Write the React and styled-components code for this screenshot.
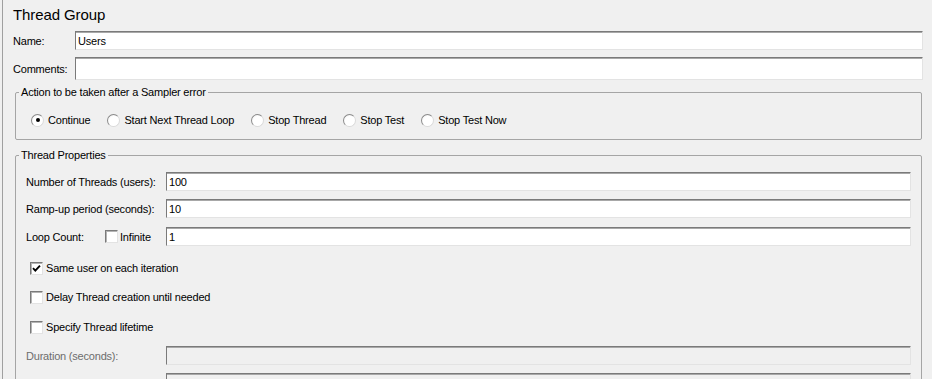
import styled, { createGlobalStyle } from "styled-components";

const GlobalStyle = createGlobalStyle`
  html, body {
    margin: 0;
    padding: 0;
    background: #f0f0f0;
  }
  body {
    font-family: "Liberation Sans", Arial, sans-serif;
    font-size: 11px;
    letter-spacing: -0.2px;
    color: #000;
  }
`;

const Panel = styled.div`
  height: 379px;
  box-sizing: border-box;
  margin-left: 2px;
  border-left: 1px solid #a0a0a0;
  padding: 6px 9px 0 10px;
  overflow: hidden;
`;

const Title = styled.h1`
  margin: 0;
  font-size: 15px;
  line-height: 18px;
  font-weight: normal;
  letter-spacing: -0.1px;
`;

const Row = styled.div`
  display: flex;
  align-items: center;
  margin-top: ${(p) => p.$top || 0}px;
  height: ${(p) => p.$h || 16}px;
`;

const Label = styled.span`
  width: ${(p) => p.$w}px;
  flex-shrink: 0;
  line-height: 14px;
  color: ${(p) => (p.$disabled ? "#6d6d6d" : "#000")};
`;

const Input = styled.input`
  flex: 1;
  min-width: 0;
  height: ${(p) => p.$h || 19}px;
  box-sizing: border-box;
  margin: 0;
  padding: 0 2px;
  border: 1px solid;
  border-color: #7a7a7a #e3e3e3 #e3e3e3 #7a7a7a;
  box-shadow: inset 0 1px 0 #a8a8a8;
  background: ${(p) => (p.disabled ? "#f0f0f0" : "#fff")};
  font-family: inherit;
  font-size: 11px;
  letter-spacing: -0.2px;
  color: #000;
  outline: none;
`;

const Group = styled.fieldset`
  margin: ${(p) => p.$top}px 1px 0 2px;
  padding: 0;
  border: 1px solid #a5a5a5;
  border-radius: 2px;
  min-width: 0;
`;

const Legend = styled.legend`
  margin-left: 3px;
  padding: 0 2px 0 2px;
  line-height: 14px;
  font-size: 11px;
`;

const RadioRow = styled.div`
  display: flex;
  align-items: center;
  gap: 17px;
  height: 16px;
  padding: 13px 0 11px 15px;
`;

const Choice = styled.label`
  display: flex;
  align-items: center;
  gap: ${(p) => p.$gap || 4}px;
  line-height: 14px;
  white-space: nowrap;
`;

const RadioCircle = styled.span`
  width: 13px;
  height: 13px;
  box-sizing: border-box;
  border-radius: 50%;
  border: 1px solid;
  border-color: #8a8a8a #dadada #dadada #8a8a8a;
  background: radial-gradient(circle at 60% 60%, #fff 55%, #e4e4e4 100%);
  display: flex;
  align-items: center;
  justify-content: center;
`;

const Dot = styled.span`
  width: 4px;
  height: 4px;
  border-radius: 50%;
  background: #000;
`;

const Box = styled.span`
  width: 13px;
  height: 13px;
  box-sizing: border-box;
  flex-shrink: 0;
  border: 1px solid;
  border-color: #7a7a7a #e3e3e3 #e3e3e3 #7a7a7a;
  box-shadow: inset 1px 1px 0 #b4b4b4;
  background: #fff;
  display: flex;
  align-items: center;
  justify-content: center;
`;

const PropsBody = styled.div`
  padding: 10px 10px 0 10px;
`;

const CheckRow = styled(Row)`
  padding-left: 4px;
`;

const LoopCell = styled.div`
  width: 140px;
  flex-shrink: 0;
  display: flex;
  align-items: center;
`;

const Radio = ({ checked, children }) => (
  <Choice>
    <RadioCircle>{checked && <Dot />}</RadioCircle>
    {children}
  </Choice>
);

const Check = ({ checked, children, gap }) => (
  <Choice $gap={gap}>
    <Box>
      {checked && (
        <svg width="9" height="9" viewBox="0 0 9 9">
          <path d="M1 4.2 L3.3 6.6 L8 1.6" fill="none" stroke="#000" strokeWidth="1.9" />
        </svg>
      )}
    </Box>
    {children}
  </Choice>
);

export default function App() {
  return (
    <>
      <GlobalStyle />
      <Panel>
        <Title>Thread Group</Title>
        <Row $top={7} $h={19}>
          <Label $w={62}>Name:</Label>
          <Input defaultValue="Users" />
        </Row>
        <Row $top={7} $h={23}>
          <Label $w={62}>Comments:</Label>
          <Input $h={23} defaultValue="" />
        </Row>

        <Group $top={5}>
          <Legend>Action to be taken after a Sampler error</Legend>
          <RadioRow>
            <Radio checked>Continue</Radio>
            <Radio>Start Next Thread Loop</Radio>
            <Radio>Stop Thread</Radio>
            <Radio>Stop Test</Radio>
            <Radio>Stop Test Now</Radio>
          </RadioRow>
        </Group>

        <Group $top={8}>
          <Legend>Thread Properties</Legend>
          <PropsBody>
            <Row $h={19}>
              <Label $w={140}>Number of Threads (users):</Label>
              <Input defaultValue="100" />
            </Row>
            <Row $top={8} $h={19}>
              <Label $w={140}>Ramp-up period (seconds):</Label>
              <Input defaultValue="10" />
            </Row>
            <Row $top={9} $h={19}>
              <LoopCell>
                <Label $w={79}>Loop Count:</Label>
                <Check gap={2}>Infinite</Check>
              </LoopCell>
              <Input defaultValue="1" />
            </Row>
            <CheckRow $top={14}>
              <Check checked gap={3}>Same user on each iteration</Check>
            </CheckRow>
            <CheckRow $top={13}>
              <Check gap={3}>Delay Thread creation until needed</Check>
            </CheckRow>
            <CheckRow $top={14}>
              <Check gap={3}>Specify Thread lifetime</Check>
            </CheckRow>
            <Row $top={11} $h={19}>
              <Label $w={140} $disabled>Duration (seconds):</Label>
              <Input disabled defaultValue="" />
            </Row>
            <Row $top={8} $h={19}>
              <Label $w={140} $disabled />
              <Input disabled defaultValue="" />
            </Row>
          </PropsBody>
        </Group>
      </Panel>
    </>
  );
}
